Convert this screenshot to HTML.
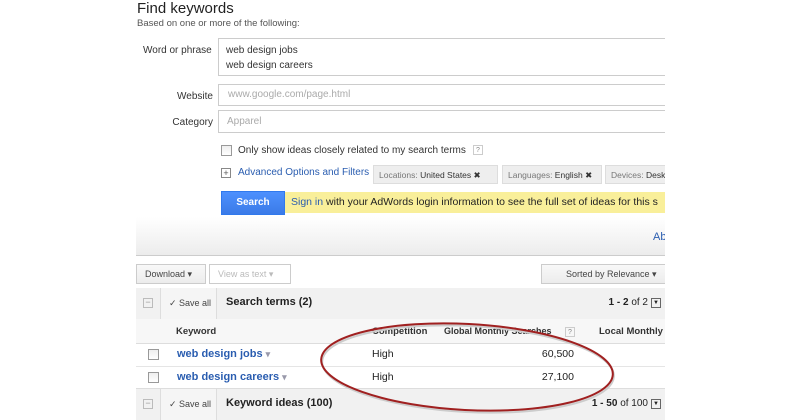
<!DOCTYPE html>
<html><head><style>
*{margin:0;padding:0;box-sizing:border-box}
body{width:800px;height:420px;background:#fff;font-family:"Liberation Sans",Arial,sans-serif;position:relative;overflow:hidden;color:#222}
.a{position:absolute;white-space:nowrap}
.box{position:absolute;border:1px solid #ccc;background:#fff}
.ph{color:#aaa;font-size:10px}
.lbl{font-size:10px;color:#333;text-align:right;width:70px}
.chip{position:absolute;background:#eee;border:1px solid #ddd;font-size:8.5px;color:#777;padding:4px 5px;height:19px;white-space:nowrap;overflow:hidden}
.chip b{font-weight:normal;color:#333}
.btn{position:absolute;border:1px solid #ccc;background:linear-gradient(#f8f8f8,#ececec);font-size:9px;color:#444;padding:4px 8px;height:20px}
.cb{position:absolute;width:11px;height:11px;border:1px solid #999;background:linear-gradient(#eee,#fff)}
.kw{color:#2a5db0;font-weight:bold;font-size:11px}
.hd{font-size:9.5px;color:#333;font-weight:bold}
</style></head><body>
<div class="a" style="left:137px;top:0px;font-size:15px;color:#222">Find keywords</div>
<div class="a" style="left:137px;top:18px;font-size:9.5px;color:#555">Based on one or more of the following:</div>

<div class="a lbl" style="left:143px;top:45px;text-align:left">Word or phrase</div>
<div class="box" style="left:218px;top:38px;width:460px;height:38px"></div>
<div class="a" style="left:226px;top:43px;font-size:10px;color:#333;line-height:15px">web design jobs<br>web design careers</div>

<div class="a lbl" style="left:143px;top:91px">Website</div>
<div class="box" style="left:218px;top:84px;width:460px;height:22px"></div>
<div class="a ph" style="left:228px;top:89px">www.google.com/page.html</div>

<div class="a lbl" style="left:143px;top:117px">Category</div>
<div class="box" style="left:218px;top:110px;width:460px;height:23px"></div>
<div class="a ph" style="left:227px;top:116px">Apparel</div>

<div class="cb" style="left:221px;top:145px"></div>
<div class="a" style="left:238px;top:145px;font-size:10px;color:#333">Only show ideas closely related to my search terms</div>
<div class="a" style="left:473px;top:145px;width:10px;height:10px;border:1px solid #ccc;font-size:7px;color:#888;text-align:center;line-height:9px">?</div>

<div class="a" style="left:221px;top:168px;width:10px;height:10px;border:1px solid #888;font-size:9px;line-height:8px;text-align:center;color:#555">+</div>
<div class="a" style="left:238px;top:167px;font-size:10px;color:#2a5db0">Advanced Options and Filters</div>
<div class="chip" style="left:373px;top:165px;width:125px">Locations: <b>United States</b> <b>✖</b></div>
<div class="chip" style="left:502px;top:165px;width:100px">Languages: <b>English</b> <b>✖</b></div>
<div class="chip" style="left:605px;top:165px;width:70px">Devices: <b>Desk</b></div>

<div class="a" style="left:221px;top:191px;width:64px;height:24px;background:linear-gradient(#4d90fe,#3b7be8);border:1px solid #3079ed;color:#fff;font-size:10px;font-weight:bold;text-align:center;line-height:22px">Search</div>
<div class="a" style="left:285px;top:192px;width:390px;height:21px;background:#f9ef9a;font-size:10.5px;line-height:21px;padding-left:6px;color:#222;overflow:hidden"><span style="color:#2a5db0">Sign in</span> with your AdWords login information to see the full set of ideas for this s</div>

<div class="a" style="left:136px;top:217px;width:540px;height:39px;background:linear-gradient(#fff,#ececec);border-bottom:1px solid #ccc"></div>
<div class="a" style="left:653px;top:231px;font-size:11px;color:#2a5db0">Ab</div>

<div class="btn" style="left:136px;top:264px;width:70px">Download ▾</div>
<div class="btn" style="left:209px;top:264px;width:82px;color:#bbb;background:#fff">View as text ▾</div>
<div class="btn" style="left:541px;top:264px;width:135px;padding-left:24px">Sorted by Relevance ▾</div>

<div class="a" style="left:136px;top:288px;width:540px;height:31px;background:#f1f1f1"></div>
<div class="a" style="left:143px;top:298px;width:10px;height:10px;border:1px solid #bbb;font-size:9px;line-height:7px;text-align:center;color:#999">−</div>
<div class="a" style="left:160px;top:288px;width:57px;height:31px;border-left:1px solid #ddd;border-right:1px solid #ddd;background:#f5f5f5;font-size:9px;color:#444;line-height:31px;padding-left:8px">✓ Save all</div>
<div class="a" style="left:226px;top:296px;font-size:11px;font-weight:bold;color:#222">Search terms (2)</div>
<div class="a" style="left:600px;top:297px;width:48px;text-align:right;font-size:10px;font-weight:bold;color:#222">1 - 2 <span style="font-weight:normal">of 2</span></div>
<div class="a" style="left:651px;top:298px;width:10px;height:10px;border:1px solid #666;font-size:6px;text-align:center;line-height:9px">▼</div>

<div class="a" style="left:136px;top:319px;width:540px;height:25px;background:#f7f7f7;border-bottom:1px solid #ddd"></div>
<div class="a hd" style="left:176px;top:326px">Keyword</div>
<div class="a hd" style="left:372px;top:326px">Competition</div>
<div class="a hd" style="left:444px;top:326px;font-size:9px">Global Monthly Searches</div>
<div class="a" style="left:565px;top:327px;width:10px;height:10px;border:1px solid #ccc;font-size:7px;color:#888;text-align:center;line-height:9px">?</div>
<div class="a hd" style="left:599px;top:326px">Local Monthly</div>

<div class="a" style="left:136px;top:366px;width:540px;border-top:1px solid #e5e5e5"></div>
<div class="a" style="left:136px;top:388px;width:540px;border-top:1px solid #ddd"></div>
<div class="cb" style="left:148px;top:349px"></div>
<div class="cb" style="left:148px;top:372px"></div>
<div class="a kw" style="left:177px;top:348px">web design jobs <span style="color:#99a;font-size:9px">▾</span></div>
<div class="a kw" style="left:177px;top:371px">web design careers <span style="color:#99a;font-size:9px">▾</span></div>
<div class="a" style="left:372px;top:348px;font-size:10.5px">High</div>
<div class="a" style="left:372px;top:371px;font-size:10.5px">High</div>
<div class="a" style="left:510px;top:348px;font-size:10.5px;width:64px;text-align:right">60,500</div>
<div class="a" style="left:510px;top:371px;font-size:10.5px;width:64px;text-align:right">27,100</div>

<div class="a" style="left:136px;top:389px;width:540px;height:31px;background:#f1f1f1"></div>
<div class="a" style="left:143px;top:399px;width:10px;height:10px;border:1px solid #bbb;font-size:9px;line-height:7px;text-align:center;color:#999">−</div>
<div class="a" style="left:160px;top:389px;width:57px;height:31px;border-left:1px solid #ddd;border-right:1px solid #ddd;background:#f5f5f5;font-size:9px;color:#444;line-height:31px;padding-left:8px">✓ Save all</div>
<div class="a" style="left:226px;top:397px;font-size:11px;font-weight:bold;color:#222">Keyword ideas (100)</div>
<div class="a" style="left:570px;top:398px;width:78px;text-align:right;font-size:10px;font-weight:bold;color:#222">1 - 50 <span style="font-weight:normal">of 100</span></div>
<div class="a" style="left:651px;top:399px;width:10px;height:10px;border:1px solid #666;font-size:6px;text-align:center;line-height:9px">▼</div>

<div class="a" style="left:665px;top:0;width:135px;height:420px;background:#fff"></div>

<svg class="a" style="left:0;top:0" width="800" height="420"><ellipse cx="468" cy="369" rx="146" ry="43" transform="rotate(3 468 369)" fill="none" stroke="#ccc" stroke-width="2"/><ellipse cx="467" cy="367" rx="146" ry="43" transform="rotate(3 467 367)" fill="none" stroke="#a02020" stroke-width="2"/></svg>
</body></html>
